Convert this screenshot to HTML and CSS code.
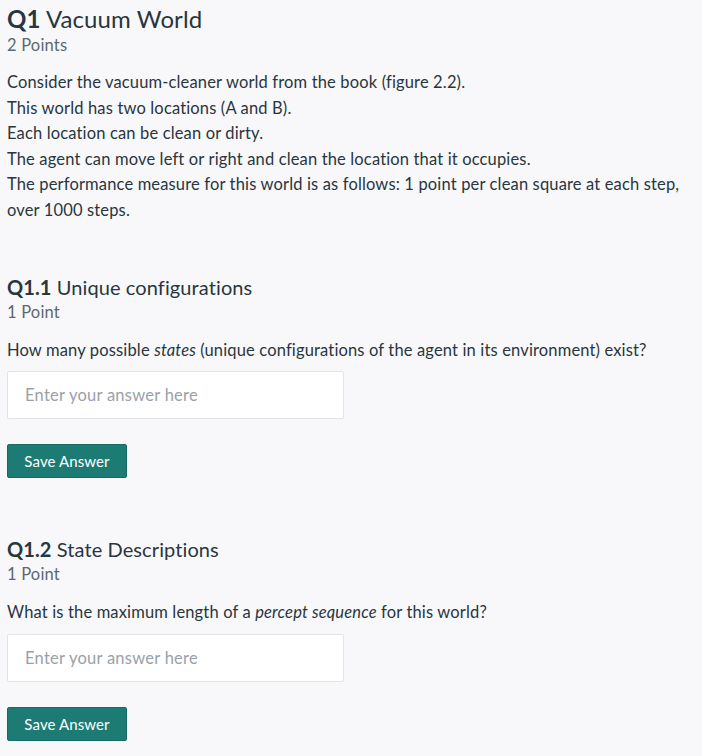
FILE: index.html
```html
<!DOCTYPE html>
<html>
<head>
<meta charset="utf-8">
<link rel="stylesheet" href="styles.css">
</head>
<body>
<div class="page">
  <section class="question">
    <h1 class="q-title"><b>Q1</b> Vacuum World</h1>
    <div class="q-points">2 Points</div>
    <div class="q-body">
      <p>Consider the vacuum-cleaner world from the book (figure 2.2).<br>
      This world has two locations (A and B).<br>
      Each location can be clean or dirty.<br>
      The agent can move left or right and clean the location that it occupies.<br>
      The performance measure for this world is as follows: 1 point per clean square at each step, over 1000 steps.</p>
    </div>
  </section>

  <section class="question sub first">
    <h2 class="q-title"><b>Q1.1</b> Unique configurations</h2>
    <div class="q-points">1 Point</div>
    <p class="q-text">How many possible <em>states</em> (unique configurations of the agent in its environment) exist?</p>
    <input class="answer" type="text" placeholder="Enter your answer here">
    <button class="save">Save Answer</button>
  </section>

  <section class="question sub second">
    <h2 class="q-title"><b>Q1.2</b> State Descriptions</h2>
    <div class="q-points">1 Point</div>
    <p class="q-text">What is the maximum length of a <em>percept sequence</em> for this world?</p>
    <input class="answer" type="text" placeholder="Enter your answer here">
    <button class="save">Save Answer</button>
  </section>
</div>
</body>
</html>
```
FILE: styles.css
```css
html, body {
  margin: 0;
  padding: 0;
  background: #f8f8fa;
}
body {
  font-family: "Lato", "Open Sans", sans-serif;
  color: #28363e;
  font-size: 16.5px;
  letter-spacing: 0.15px;
}
.page {
  padding: 0 7px;
  width: 688px;
}
.question {
  display: flex;
  flex-direction: column;
  align-items: flex-start;
}
.q-title {
  margin: 0;
  font-weight: 400;
  font-size: 24px;
  letter-spacing: 0.1px;
  line-height: 30px;
  padding-top: 4px;
}
.q-title b { font-weight: 700; }
.sub .q-title { font-size: 20px; letter-spacing: 0.1px; }
.q-points {
  color: #5c6870;
  font-size: 16.5px;
  letter-spacing: 0.2px;
  line-height: 20px;
  margin-top: 1px;
}
.sub .q-points { margin-top: 0; }
.q-body p {
  margin: 15px 0 0;
  line-height: 25.6px;
}
.first { margin-top: 44px; }
.second { margin-top: 52px; }
.q-text {
  margin: 17px 0 0;
  line-height: 22px;
}
.second .answer { margin-top: 11px; }
.answer {
  margin-top: 10px;
  width: 337px;
  height: 48px;
  box-sizing: border-box;
  border: 1px solid #e3e3e8;
  border-radius: 2px;
  background: #fff;
  padding: 0 17px;
  font-family: inherit;
  font-size: 16.5px;
  letter-spacing: 0.25px;
  color: #28363e;
  outline: none;
}
.answer::placeholder { color: #9aa1a8; }
.save {
  margin-top: 25px;
  width: 120px;
  height: 34px;
  border: 1px solid #176b64;
  border-radius: 2px;
  background: #1c7c74;
  color: #fff;
  font-family: inherit;
  font-size: 15px;
  letter-spacing: 0.1px;
  padding: 0;
}
```
